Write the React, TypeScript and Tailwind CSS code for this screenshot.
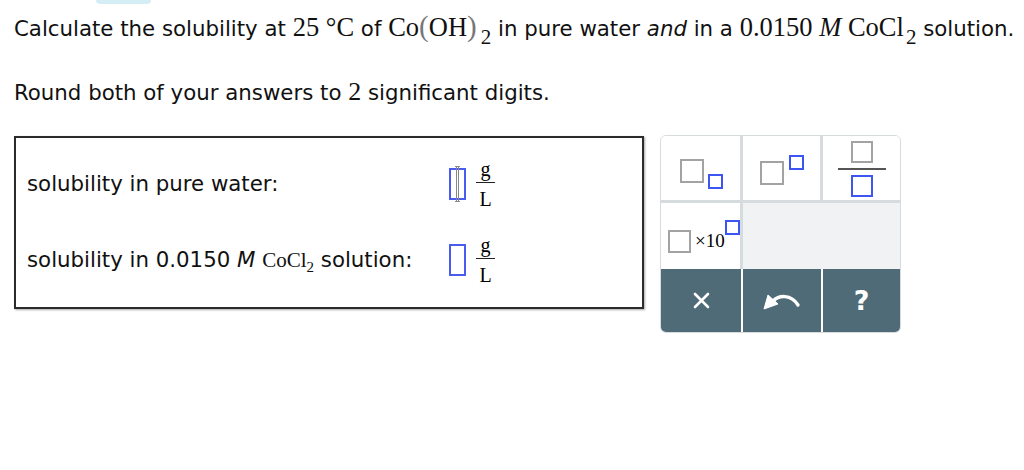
import React from "react";

const sans = { fontFamily: '"DejaVu Sans", Verdana, sans-serif' };

function GraySq({ w = 24, h = 24 }: { w?: number; h?: number }) {
  return <div className="border-2 border-[#a3a3a3] bg-white" style={{ width: w, height: h }} />;
}
function BlueSq({ w = 15, h = 15 }: { w?: number; h?: number }) {
  return <div className="border-2 border-[#3d55f2] bg-white" style={{ width: w, height: h }} />;
}

function Frac() {
  return (
    <div className="flex flex-col items-center font-['Liberation_Serif',serif] text-[20px] leading-none text-black">
      <span className="leading-[18px]">g</span>
      <div className="w-[19px] h-[1.5px] bg-[#222] mt-[4px] mb-[7px]" />
      <span className="leading-[18px]">L</span>
    </div>
  );
}

export default function App() {
  return (
    <div className="relative w-[1024px] h-[470px] bg-white overflow-hidden text-[#111]" style={sans}>
      <div className="absolute left-[96px] top-0 w-[55px] h-[4px] rounded-b-full bg-[#d5eef6]" />
      <div className="pl-[14px] pt-[12px]">
        <p className="whitespace-nowrap text-[21.3px] leading-[28px] h-[28px]">
          Calculate the solubility at{" "}
          <span className="font-['Liberation_Serif',serif] text-[26.5px] leading-none">25 °C</span> of{" "}
          <span className="font-['Liberation_Serif',serif] text-[26.5px] leading-none">
            Co<span className="text-[#777] text-[29px]">(</span>OH<span className="text-[#777] text-[29px]">)</span>
            <span className="relative top-[8px] ml-[4px] text-[21px]">2</span>
          </span>{" "}
          in pure water <i>and</i> in a{" "}
          <span className="font-['Liberation_Serif',serif] text-[26.5px] leading-none">
            0.0150 <i>M</i> CoCl<span className="relative top-[8px] ml-[2px] text-[21px]">2</span>
          </span>{" "}
          solution.
        </p>
        <p className="mt-[39px] whitespace-nowrap text-[21.3px] leading-[28px] h-[28px]">
          Round both of your answers to{" "}
          <span className="font-['Liberation_Serif',serif] text-[26px] leading-none">2</span> significant digits.
        </p>

        <div className="mt-[29px] flex items-start gap-[16px]">
          <div className="w-[630px] h-[173px] border-2 border-[#2b2b2b] shadow-[1px_1px_2px_rgba(0,0,0,0.35)] pl-[11px] pt-[8px] flex flex-col">
            <div className="h-[76px] flex items-center">
              <div className="w-[422px] text-[21.3px] whitespace-nowrap">solubility in pure water:</div>
              <div className="relative w-[17px] h-[32px] border-2 border-[#4a5cf0]">
                <div className="absolute left-[5px] -top-[4px] w-[3px] h-[36px] border-x border-[#888]" />
                <div className="absolute left-[4px] -top-[4px] w-[5px] h-[1px] bg-[#888]" />
                <div className="absolute left-[4px] -bottom-[4px] w-[5px] h-[1px] bg-[#888]" />
              </div>
              <div className="ml-[10px]">
                <Frac />
              </div>
            </div>
            <div className="h-[76px] flex items-center">
              <div className="w-[422px] text-[21.3px] whitespace-nowrap">
                solubility in 0.0150 <i>M</i>{" "}
                <span className="font-['Liberation_Serif',serif] text-[21px]">
                  CoCl<span className="relative top-[5px] text-[15px]">2</span>
                </span>{" "}
                solution:
              </div>
              <div className="w-[17px] h-[32px] border-2 border-[#4a5cf0]" />
              <div className="ml-[10px]">
                <Frac />
              </div>
            </div>
          </div>

          <div className="-mt-[1px] w-[241px] h-[198px] rounded-[6px] overflow-hidden border border-[#d6dbde] flex flex-col">
            <div className="h-[67px] flex bg-white border-b-[3px] border-[#d6dbde]">
              <div className="w-[79px] flex items-center justify-center pl-[2px]">
                <div className="flex items-end gap-[4px] pt-[6px]">
                  <GraySq />
                  <div className="-mb-[6px]"><BlueSq /></div>
                </div>
              </div>
              <div className="w-[80px] border-l-[3px] border-[#d6dbde] flex items-center justify-center">
                <div className="flex items-start gap-[5px] pt-[4px]">
                  <div className="mt-[6px]"><GraySq /></div>
                  <BlueSq />
                </div>
              </div>
              <div className="flex-1 border-l-[3px] border-[#d6dbde] flex flex-col items-center justify-center pt-[2px]">
                <GraySq w={22} h={22} />
                <div className="w-[48px] h-[2px] bg-[#555] my-[5px]" />
                <div className="border-2 border-[#3d55f2]" style={{ width: 22, height: 22 }} />
              </div>
            </div>
            <div className="h-[66px] flex">
              <div className="w-[79px] bg-white flex items-center pl-[7px] pt-[10px]">
                <div className="flex items-end">
                  <GraySq w={23} h={23} />
                  <span className="font-['Liberation_Serif',serif] text-[19px] leading-none ml-[4px] mb-[3px] text-black">×10</span>
                  <div className="self-start -mt-[10px]"><BlueSq w={15} h={15} /></div>
                </div>
              </div>
              <div className="flex-1 border-l-[3px] border-[#d6dbde] bg-[#f1f2f4]" />
            </div>
            <div className="flex-1 flex bg-[#4e6b77]">
              <div className="w-[80px] flex items-center justify-center">
                <svg width="17" height="17" viewBox="0 0 17 17">
                  <path d="M2 2 L15 15 M15 2 L2 15" stroke="white" strokeWidth="2.6" strokeLinecap="round" />
                </svg>
              </div>
              <div className="w-[80px] border-l-2 border-white flex items-center justify-center">
                <svg width="38" height="18" viewBox="0 0 38 18">
                  <path d="M10 9 C16 3, 28 2, 35 13" stroke="white" strokeWidth="3.4" fill="none" strokeLinecap="round" />
                  <path d="M1 17 L5 3 L15 12 Z" fill="white" strokeLinejoin="round" stroke="white" strokeWidth="1" />
                </svg>
              </div>
              <div className="flex-1 border-l-2 border-white flex items-center justify-center">
                <span className="text-white text-[27px] leading-none font-semibold" style={sans}>?</span>
              </div>
            </div>
          </div>
        </div>
      </div>
    </div>
  );
}
